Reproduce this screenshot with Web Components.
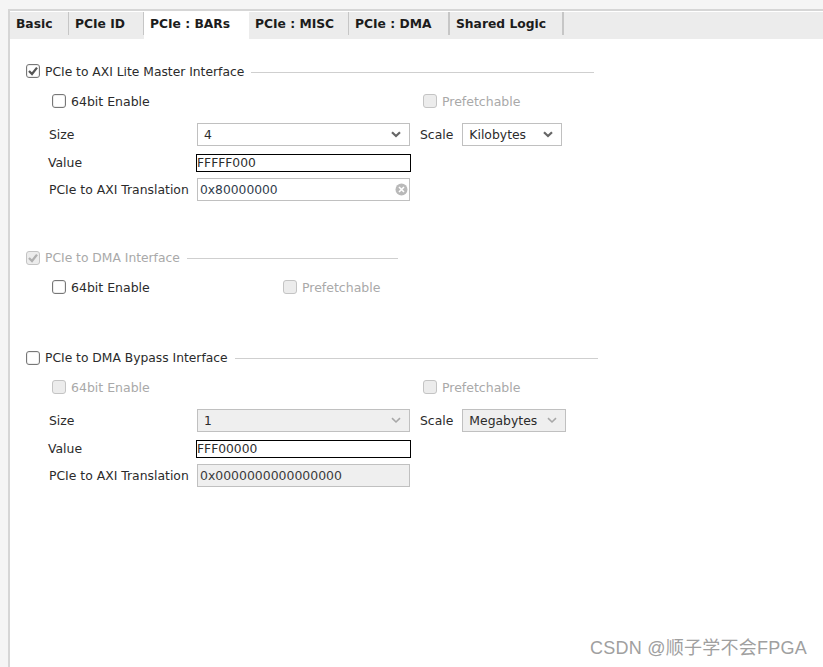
<!DOCTYPE html>
<html lang="zh">
<head>
<meta charset="utf-8">
<title>PCIe : BARs</title>
<style>
  html, body { margin: 0; height: 100%; overflow: hidden; }
  body {
    background: #f5f5f5;
    font-family: "DejaVu Sans", sans-serif;
    font-size: 12.3px;
    color: #2b2b2b;
  }
</style>
</head>
<body>
<x-panel>
  <x-tabs active="PCIe : BARs"></x-tabs>

  <x-section label="PCIe to AXI Lite Master Interface" checked box-shift="-1px" line-end="594" style="margin-top:23px">
    <x-check-row pre-x="423"></x-check-row>
    <x-form size="4" scale="Kilobytes" value="FFFFF000" scale-width="100" translation="0x80000000" clearable></x-form>
  </x-section>

  <x-section label="PCIe to DMA Interface" checked disabled line-end="398" style="margin-top:47px">
    <x-check-row pre-x="283"></x-check-row>
  </x-section>

  <x-section label="PCIe to DMA Bypass Interface" line-end="598" style="margin-top:51px">
    <x-check-row pre-x="423" bit-disabled></x-check-row>
    <x-form size="1" scale="Megabytes" value="FFF00000" scale-width="104" translation="0x0000000000000000" disabled></x-form>
  </x-section>
</x-panel>
<x-watermark>CSDN @顺子学不会FPGA</x-watermark>

<script>
const html = String.raw;

class XPanel extends HTMLElement {
  constructor() {
    super();
    this.attachShadow({ mode: "open" }).innerHTML = html`
      <style>
        :host {
          display: block;
          box-sizing: border-box;
          height: 658px;
          margin: 9px 0 0 8px;
          padding-top: 1px;
          border-top: 2px solid #d6d6d6;
          border-left: 2px solid #d6d6d6;
          background: #fff;
        }
      </style>
      <slot></slot>`;
  }
}

const TABS = [
  ["Basic", 59], ["PCIe ID", 75], ["PCIe : BARs", 105],
  ["PCIe : MISC", 100], ["PCIe : DMA", 101], ["Shared Logic", 114]
];

class XTabs extends HTMLElement {
  constructor() {
    super();
    this.attachShadow({ mode: "open" }).innerHTML = html`
      <style>
        :host {
          display: flex;
          height: 27px;
          background: #ececec;
          font-weight: 700;
          font-size: 12.3px;
          color: #1c1c1c;
        }
        .tab {
          box-sizing: border-box;
          height: 23px;
          padding: 5px 0 0 6px;
          border-right: 1px solid #c6c6c6;
          white-space: nowrap;
        }
        .tab.active {
          height: 27px;
          background: #fff;
          border-right: 0;
        }
        .tab.thick { border-right-width: 2px; }
      </style>`;
  }
  connectedCallback() {
    const active = this.getAttribute("active");
    for (const [name, w] of TABS) {
      const $t = document.createElement("div");
      $t.className = "tab";
      if (name === active) $t.classList.add("active");
      if (name === "PCIe : DMA" || name === "Shared Logic") $t.classList.add("thick");
      $t.style.width = w + "px";
      $t.textContent = name;
      this.shadowRoot.appendChild($t);
    }
  }
}

class XCheck extends HTMLElement {
  constructor() {
    super();
    this.attachShadow({ mode: "open" }).innerHTML = html`
      <style>
        :host {
          display: inline-flex;
          align-items: center;
          gap: 5px;
          height: 20px;
          white-space: nowrap;
        }
        .box {
          box-sizing: border-box;
          width: 14px;
          height: 14px;
          border: 1px solid #777;
          border-radius: 3px;
          background: #fff;
          box-shadow: inset 0 0 0 1px rgba(0, 0, 0, .07);
          flex: none;
          transform: translateY(var(--box-shift, 0));
        }
        svg { display: none; width: 12px; height: 12px; }
        :host([checked]) svg { display: block; }
        :host([disabled]) { color: #a9a9a9; }
        :host([disabled]) .box { border-color: #c4c4c4; background: #ececec; box-shadow: none; }
        :host([disabled]) path { stroke: #b0b0b0; }
      </style>
      <span class="box">
        <svg viewBox="0 0 12 12"><path d="M2 6 L5 9 L10 2.6" fill="none" stroke="#555" stroke-width="2.3"/></svg>
      </span>
      <span><slot></slot></span>`;
  }
}

class XSection extends HTMLElement {
  constructor() {
    super();
    this.attachShadow({ mode: "open" }).innerHTML = html`
      <style>
        :host { display: block; }
        .head {
          display: flex;
          align-items: center;
          gap: 7px;
          height: 20px;
          margin-left: 16px;
        }
        .rule { flex: 1; height: 1px; background: #cfcfcf; }
      </style>
      <div class="head">
        <x-check id="c"></x-check>
        <span class="rule"></span>
      </div>
      <slot></slot>`;
  }
  connectedCallback() {
    const $c = this.shadowRoot.getElementById("c");
    $c.textContent = this.getAttribute("label");
    if (this.hasAttribute("checked")) $c.setAttribute("checked", "");
    if (this.hasAttribute("disabled")) $c.setAttribute("disabled", "");
    if (this.hasAttribute("box-shift")) $c.style.setProperty("--box-shift", this.getAttribute("box-shift"));
    // the rule stops at its own x; the head starts at x=26
    this.shadowRoot.querySelector(".head").style.width = (this.getAttribute("line-end") - 26) + "px";
  }
}

class XCheckRow extends HTMLElement {
  constructor() {
    super();
    this.attachShadow({ mode: "open" }).innerHTML = html`
      <style>
        :host {
          display: grid;
          justify-content: start;
          height: 20px;
          margin-top: 9px;
          padding-left: 42px;
          font-size: 12.5px;
        }
      </style>
      <x-check id="bit">64bit Enable</x-check>
      <x-check id="pre" disabled>Prefetchable</x-check>`;
  }
  connectedCallback() {
    if (this.hasAttribute("bit-disabled")) {
      this.shadowRoot.getElementById("bit").setAttribute("disabled", "");
    }
    this.style.gridTemplateColumns = (this.getAttribute("pre-x") - 52) + "px auto";
  }
}

class XSelect extends HTMLElement {
  static get observedAttributes() {
    return ["value"];
  }
  constructor() {
    super();
    this.attachShadow({ mode: "open" }).innerHTML = html`
      <style>
        :host {
          box-sizing: border-box;
          display: flex;
          align-items: center;
          height: 23px;
          padding: 0 8px 0 6px;
          border: 1px solid #c0c0c0;
          background: #fff;
        }
        :host([disabled]) { background: #efefef; }
        :host([disabled]) path { stroke: #a8a8a8; stroke-width: 1.6; }
        span { flex: 1; white-space: nowrap; }
        svg { width: 10px; height: 7px; flex: none; }
      </style>
      <span id="v"></span>
      <svg viewBox="0 0 10 7"><path d="M1 1.2 L5 5 L9 1.2" fill="none" stroke="#666" stroke-width="2.2"/></svg>`;
  }
  attributeChangedCallback() {
    this.shadowRoot.getElementById("v").textContent = this.getAttribute("value");
  }
}

class XInput extends HTMLElement {
  static get observedAttributes() {
    return ["value"];
  }
  constructor() {
    super();
    this.attachShadow({ mode: "open" }).innerHTML = html`
      <style>
        :host {
          box-sizing: border-box;
          display: flex;
          align-items: center;
          justify-content: space-between;
          height: 23px;
          padding: 0 2px 0 2px;
          border: 1px solid #c0c0c0;
          background: #fff;
          color: #2e3a4a;
        }
        :host([disabled]) { background: #efefef; color: #3a3a3a; font-size: 12.45px; }
        :host([strict]) {
          height: 18px;
          padding: 0;
          border-color: #000;
          color: #2b2b2b;
        }
        :host([clearable]) { padding-right: 1px; }
        svg { display: none; width: 13px; height: 13px; }
        :host([clearable]) svg { display: block; }
      </style>
      <span id="v"></span>
      <svg viewBox="0 0 13 13">
        <circle cx="6.5" cy="6.5" r="6" fill="#b9b9b9"/>
        <path d="M4 4 L9 9 M9 4 L4 9" stroke="#fff" stroke-width="1.6"/>
      </svg>`;
  }
  attributeChangedCallback() {
    this.shadowRoot.getElementById("v").textContent = this.getAttribute("value");
  }
}

class XForm extends HTMLElement {
  constructor() {
    super();
    this.attachShadow({ mode: "open" }).innerHTML = html`
      <style>
        :host {
          display: grid;
          grid-template-columns: 187px 213px auto;
          justify-content: start;
          margin-top: 12px;
        }
        .lbl { padding-left: 39px; align-self: center; white-space: nowrap; font-size: 12.4px; }
        .scale { display: flex; align-items: center; gap: 9px; margin-left: 10px; font-size: 12.4px; }
        .value-lbl { padding-left: 38px; }
        #value { margin: 8px -1px 6px -1px; }
        .spacer { grid-column: 3; }
      </style>
      <div class="lbl">Size</div>
      <x-select id="size"></x-select>
      <div class="scale">Scale <x-select id="scale"></x-select></div>
      <div class="lbl value-lbl">Value</div>
      <x-input id="value" strict></x-input>
      <div class="spacer"></div>
      <div class="lbl">PCIe to AXI Translation</div>
      <x-input id="trans"></x-input>`;
  }
  connectedCallback() {
    const $ = id => this.shadowRoot.getElementById(id);
    $("size").setAttribute("value", this.getAttribute("size"));
    $("scale").setAttribute("value", this.getAttribute("scale"));
    $("scale").style.width = this.getAttribute("scale-width") + "px";
    $("value").setAttribute("value", this.getAttribute("value"));
    $("trans").setAttribute("value", this.getAttribute("translation"));
    if (this.hasAttribute("clearable")) $("trans").setAttribute("clearable", "");
    if (this.hasAttribute("disabled")) {
      $("size").setAttribute("disabled", "");
      $("scale").setAttribute("disabled", "");
      $("trans").setAttribute("disabled", "");
    }
  }
}

class XWatermark extends HTMLElement {
  constructor() {
    super();
    this.attachShadow({ mode: "open" }).innerHTML = html`
      <style>
        :host {
          position: absolute;
          left: 590px;
          top: 637px;
          font: 18px/22px "Liberation Sans", "Noto Sans CJK SC", sans-serif;
          letter-spacing: 0.25px;
          color: #a0a0a0;
          white-space: nowrap;
        }
      </style>
      <slot></slot>`;
  }
}

customElements.define("x-check", XCheck);
customElements.define("x-select", XSelect);
customElements.define("x-input", XInput);
customElements.define("x-panel", XPanel);
customElements.define("x-tabs", XTabs);
customElements.define("x-section", XSection);
customElements.define("x-check-row", XCheckRow);
customElements.define("x-form", XForm);
customElements.define("x-watermark", XWatermark);
</script>
</body>
</html>
